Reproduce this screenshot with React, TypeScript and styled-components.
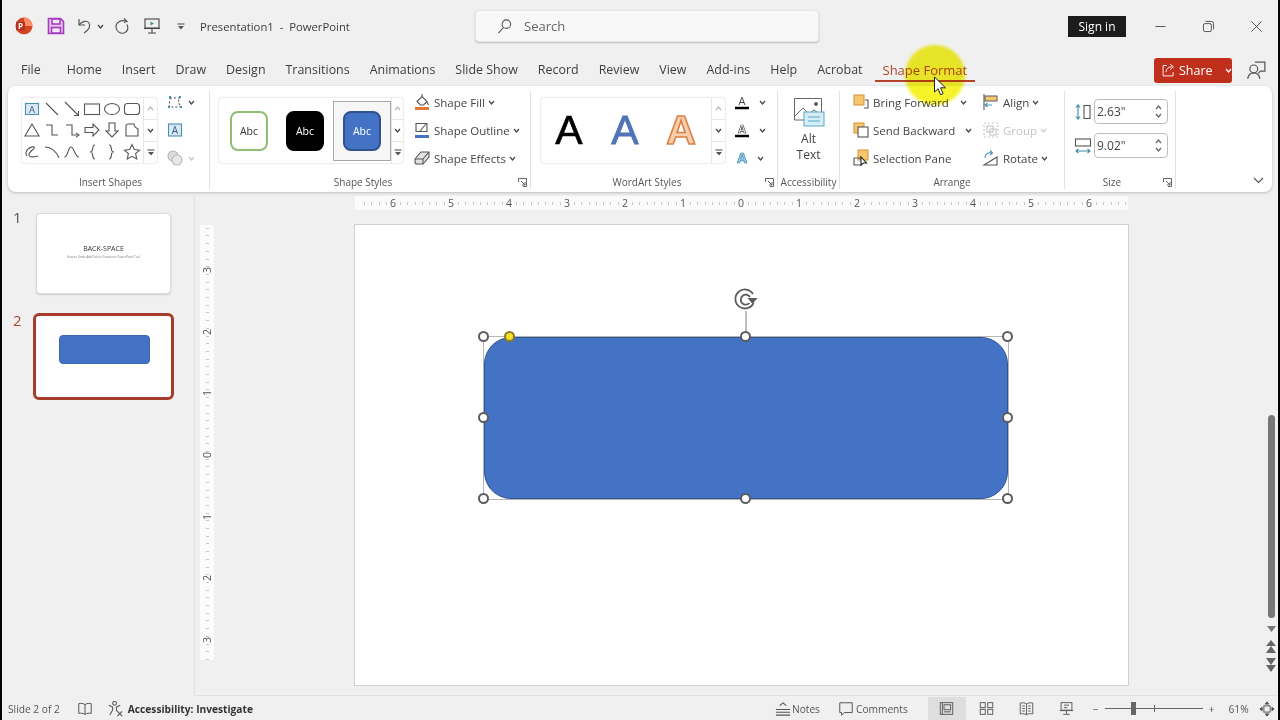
import React from 'react'
import styled, { createGlobalStyle } from 'styled-components'

const Global = createGlobalStyle`
  html, body { margin: 0; padding: 0; background: #000; }
  * { box-sizing: border-box; }
`

const Frame = styled.div`
  position: relative;
  width: 1280px;
  height: 720px;
  overflow: hidden;
  display: flex;
  flex-direction: column;
  background: #f0f0f0;
  border-left: 2px solid #000;
  border-right: 2px solid #000;
  font-family: 'Open Sans', 'Noto Sans', sans-serif;
  color: #444;
`

const Highlight = styled.div`
  position: absolute;
  left: 903px;
  top: 45px;
  width: 60px;
  height: 60px;
  border-radius: 50%;
  background: #f6f32a;
  mix-blend-mode: multiply;
  filter: blur(1.5px);
  z-index: 5;
`

const Pointer = styled.svg`
  position: absolute;
  left: 931px;
  top: 76px;
  z-index: 6;
`

/* title bar */
const TitleBar = styled.header`
  height: 52px;
  display: flex;
  align-items: center;
  padding-left: 13px;
`

const QuickIcon = styled.span<{ $gap: number; $center?: boolean }>`
  display: flex;
  align-items: ${p => (p.$center ? 'center' : 'stretch')};
  margin-left: ${p => p.$gap}px;
`

const DocTitle = styled.div`
  width: 275px;
  margin-left: 15px;
  font-size: 11.3px;
  color: #3c3c3c;
  white-space: pre;
`

const SearchBox = styled.div`
  width: 344px;
  height: 32px;
  display: flex;
  align-items: center;
  gap: 11px;
  padding-left: 20px;
  background: #f8f8f8;
  border-radius: 4px;
  border: 1px solid #e6e6e6;
  box-shadow: 0 1px 2px rgba(0, 0, 0, 0.22);
  font-size: 13px;
  color: #666;
`

const SignIn = styled.div`
  width: 58px;
  height: 21px;
  margin-left: auto;
  margin-right: 8px;
  background: #1c1c1c;
  color: #fff;
  font-size: 12px;
  line-height: 21px;
  text-align: center;
`

const WinButton = styled.div`
  width: 48px;
  padding-left: 4px;
  display: flex;
  justify-content: center;
`

/* tabs */
const TabBar = styled.nav`
  height: 34px;
  display: flex;
  align-items: center;
  padding: 2px 12px 0 19px;
`

const TabList = styled.div`
  display: flex;
  gap: 20px;
  font-size: 12.45px;
  line-height: 18px;
  color: #3f3f3f;
`

const Tab = styled.span<{ $active?: boolean; $first?: boolean }>`
  position: relative;
  white-space: nowrap;
  margin-right: ${p => (p.$first ? 6 : 0)}px;
  color: ${p => (p.$active ? '#b3432c' : 'inherit')};
  font-size: ${p => (p.$active ? '13px' : 'inherit')};
  &::after {
    content: '';
    display: ${p => (p.$active ? 'block' : 'none')};
    position: absolute;
    left: -8px;
    right: -8px;
    bottom: -3px;
    height: 2px;
    background: #b3432c;
  }
`

const ShareButton = styled.div`
  margin-left: auto;
  margin-right: 14px;
  width: 78px;
  height: 25px;
  display: flex;
  align-items: center;
  gap: 3px;
  padding-left: 7px;
  background: #bf2f1c;
  border-radius: 3px;
  color: #fff;
  font-size: 12.5px;
`

/* ribbon */
const Ribbon = styled.section`
  height: 106px;
  margin: 0 6px;
  display: flex;
  padding: 5px 0 3px;
  background: #fff;
  border-radius: 8px;
  box-shadow: 0 1px 3px rgba(0, 0, 0, 0.22);
  font-size: 11.5px;
  color: #444;
`

const Group = styled.div<{ $w: number }>`
  position: relative;
  width: ${p => p.$w}px;
  display: flex;
  flex-direction: column;
  border-right: 1px solid #e2e2e2;
`

const GroupBody = styled.div<{ $pad: number }>`
  height: 84px;
  display: flex;
  align-items: flex-start;
  padding-left: ${p => p.$pad}px;
`

const GroupLabel = styled.div<{ $pl?: number; $pr?: number }>`
  height: 14px;
  line-height: 14px;
  padding: 0 ${p => p.$pr ?? 0}px 0 ${p => p.$pl ?? 0}px;
  font-size: 10px;
  color: #555;
  text-align: center;
`

const Launcher = styled.svg`
  position: absolute;
  right: 3px;
  bottom: 2px;
`

const Gallery = styled.div<{ $w: number }>`
  width: ${p => p.$w}px;
  height: 65px;
  margin-top: 7px;
  display: flex;
  border-radius: 3px;
  box-shadow: 0 0 2px rgba(0, 0, 0, 0.28);
  background: #fff;
`

const GalleryItems = styled.div`
  flex: 1;
  display: flex;
  align-items: center;
  position: relative;
`

const ShapeGrid = styled.div`
  flex: 1;
  display: grid;
  grid-template-columns: repeat(6, 20px);
  grid-auto-rows: 21.6px;
  place-items: center;
`

const Scroller = styled.div`
  width: 14px;
  display: flex;
  flex-direction: column;
  border-left: 1px solid #e6e6e6;
`

const ScrollCell = styled.div`
  flex: 1;
  display: flex;
  align-items: center;
  justify-content: center;
  border-bottom: 1px solid #e6e6e6;
  &:last-child { border-bottom: none; }
`

const StyleThumb = styled.div<{ $bg: string; $line: string; $fg: string; $sel?: boolean }>`
  width: 38px;
  height: 40px;
  border-radius: 8px;
  margin: 0 ${p => (p.$sel ? 9 : 0)}px;
  background: ${p => p.$bg};
  border: 2px solid ${p => p.$line};
  color: ${p => p.$fg};
  font-size: 10.5px;
  display: flex;
  align-items: center;
  justify-content: center;
`

const StyleCell = styled.div<{ $sel?: boolean }>`
  height: 60px;
  display: flex;
  align-items: center;
  margin-left: ${p => (p.$sel ? 2 : 11)}px;
  margin-right: ${p => (p.$sel ? 0 : 7)}px;
  border: ${p => (p.$sel ? '1px solid #a8a8a8' : 'none')};
  background: ${p => (p.$sel ? '#f6f6f6' : 'transparent')};
`

const ArtLetter = styled.span<{ $color: string; $outline: string; $w: number; $bold?: boolean }>`
  width: 56px;
  text-align: center;
  font-family: 'Liberation Sans', sans-serif;
  font-size: 41px;
  font-weight: ${p => (p.$bold ? 700 : 400)};
  line-height: 1;
  color: ${p => p.$color};
  -webkit-text-stroke: ${p => p.$w}px ${p => p.$outline};
`

const CommandColumn = styled.div<{ $left: number; $w?: number }>`
  margin: -1px 0 0 ${p => p.$left}px;
  width: ${p => (p.$w ? `${p.$w}px` : 'auto')};
  display: flex;
  flex-direction: column;
  gap: 4px;
`

const Command = styled.div<{ $off?: boolean }>`
  height: 24px;
  display: flex;
  align-items: center;
  gap: 3px;
  white-space: nowrap;
  color: ${p => (p.$off ? '#b8b8b8' : '#444')};
  opacity: ${p => (p.$off ? 0.85 : 1)};
`

const Caret = styled.svg<{ $left?: number }>`
  margin-left: ${p => p.$left ?? 0}px;
  flex: none;
`

const AltButton = styled.div`
  width: 100%;
  display: flex;
  flex-direction: column;
  align-items: center;
  padding-top: 6px;
  line-height: 16px;
  font-size: 12px;
`

const AltWord = styled.span<{ $top?: number }>`
  margin-top: ${p => p.$top ?? 0}px;
`

const SizeColumn = styled.div`
  display: flex;
  flex-direction: column;
  gap: 9px;
  padding-top: 8px;
`

const SizeRow = styled.div`
  display: flex;
  align-items: center;
  gap: 2px;
`

const SpinBox = styled.div`
  width: 74px;
  height: 25px;
  display: flex;
  align-items: center;
  justify-content: space-between;
  padding: 0 5px 0 2px;
  border: 1px solid #bdbdbd;
  border-radius: 4px;
  font-size: 12px;
`

const SpinArrows = styled.div`
  display: flex;
  flex-direction: column;
  gap: 3px;
`

const Collapse = styled.div`
  margin-left: auto;
  margin-right: 8px;
  align-self: flex-end;
  padding-bottom: 5px;
  display: flex;
`

/* body */
const Body = styled.main`
  flex: 1;
  display: flex;
  min-height: 0;
`

const Sidebar = styled.aside`
  width: 193px;
  border-right: 1px solid #e2e2e2;
  display: flex;
  flex-direction: column;
  gap: 19px;
  padding-top: 21px;
`

const SlideEntry = styled.div`
  display: flex;
  align-items: flex-start;
  padding-left: 11px;
`

const SlideNumber = styled.span<{ $active?: boolean }>`
  width: 20px;
  font-size: 15px;
  line-height: 18px;
  color: ${p => (p.$active ? '#b3432c' : '#555')};
  margin-top: ${p => (p.$active ? -2 : -5)}px;
`

const Thumb = styled.div<{ $active?: boolean }>`
  display: flex;
  flex-direction: column;
  align-items: center;
  justify-content: center;
  background: #fff;
  width: ${p => (p.$active ? 141 : 135)}px;
  height: ${p => (p.$active ? 87 : 81)}px;
  margin-left: ${p => (p.$active ? 0 : 3)}px;
  border-radius: ${p => (p.$active ? 6 : 4)}px;
  border: ${p => (p.$active ? '3px solid #a83c2c' : '1px solid #dcdcdc')};
  box-shadow: ${p => (p.$active ? 'none' : '0 1px 2px rgba(0,0,0,.15)')};
`

const ThumbTitle = styled.div`
  font-size: 7px;
  line-height: 9px;
  margin-top: -2px;
  color: #333;
`

const ThumbSub = styled.div`
  font-size: 3px;
  line-height: 8px;
  color: #777;
  white-space: nowrap;
`

const ThumbShape = styled.div`
  width: 91px;
  height: 29px;
  margin: 0 0 14px 1px;
  border-radius: 4px;
  background: #4472c4;
  border: 1px solid #3d66ad;
`

const Editor = styled.div`
  flex: 1;
  display: flex;
  flex-direction: column;
  padding-top: 4px;
  border-bottom: 1px solid #e2e2e2;
`

const RulerH = styled.div`
  width: 773px;
  height: 14px;
  margin-left: 160px;
  padding: 0 34px 0 33px;
  display: flex;
  justify-content: space-between;
  align-items: center;
  font-size: 10.5px;
  color: #555;
  background:
    repeating-linear-gradient(90deg, #c8c8c8 0 1px, transparent 1px 7.25px) 9px center / 100% 3px no-repeat,
    #fbfbfb;
`

const RulerDigit = styled.span`
  width: 10px;
  text-align: center;
  background: #fbfbfb;
`

const Workspace = styled.div`
  flex: 1;
  display: flex;
  margin-top: 14px;
`

const RulerV = styled.div`
  width: 14px;
  height: 435px;
  margin: 1px 140px 0 5px;
  padding: 40px 0 15px;
  display: flex;
  flex-direction: column;
  justify-content: space-between;
  align-items: center;
  font-size: 10.5px;
  color: #555;
  background:
    repeating-linear-gradient(0deg, #c8c8c8 0 1px, transparent 1px 7.7px) center / 3px 100% no-repeat,
    #fbfbfb;
`

const RulerVDigit = styled.span`
  height: 10px;
  line-height: 10px;
  display: block;
  transform: rotate(-90deg);
  background: #fbfbfb;
`

const Slide = styled.div`
  position: relative;
  width: 775px;
  height: 462px;
  background: #fff;
  border: 1px solid #d0d0d0;
`

const SelectionFrame = styled.div`
  position: absolute;
  left: 127.5px;
  top: 111px;
  width: 526px;
  height: 164px;
  border: 1px solid #b5b5b5;
`

const BlueShape = styled.div`
  position: absolute;
  inset: 0;
  background: #4472c4;
  border: 1.5px solid #30548f;
  border-radius: 27px;
`

const Handle = styled.span<{ $x: string; $y: string; $yellow?: boolean }>`
  position: absolute;
  left: ${p => p.$x};
  top: ${p => p.$y};
  width: 11px;
  height: 11px;
  margin: -6px 0 0 -6px;
  border-radius: 50%;
  background: ${p => (p.$yellow ? '#f2e22a' : '#fff')};
  border: 2px solid ${p => (p.$yellow ? '#8a7c28' : '#5c5c5c')};
`

const RotateStem = styled.div`
  position: absolute;
  left: 50%;
  top: -26px;
  width: 2px;
  height: 26px;
  margin-left: -1px;
  background: #bdbdbd;
`

const RotateIcon = styled.svg`
  position: absolute;
  left: 248px;
  top: -50px;
`

const ScrollRail = styled.div`
  margin-left: auto;
  margin-right: 2px;
  margin-bottom: 23px;
  width: 10px;
  display: flex;
  flex-direction: column;
  justify-content: flex-end;
  align-items: center;
  gap: 4px;
`

const ScrollThumb = styled.div`
  width: 7px;
  height: 203px;
  margin-bottom: 4px;
  border-radius: 4px;
  background: #777;
`

const ScrollDown = styled.svg`
  margin-bottom: 4px;
`

/* status bar */
const StatusBar = styled.footer`
  height: 24px;
  display: flex;
  align-items: center;
  padding: 1px 0 0 6px;
  font-size: 10.2px;
  color: #555;
`

const StatusText = styled.span<{ $strong?: boolean; $left?: number }>`
  margin-left: ${p => p.$left ?? 0}px;
  font-weight: ${p => (p.$strong ? 700 : 400)};
  color: ${p => (p.$strong ? '#333' : '#555')};
  white-space: nowrap;
`

const StatusIcon = styled.span<{ $left: number }>`
  display: flex;
  margin-left: ${p => p.$left}px;
`

const ViewButton = styled.div<{ $active?: boolean; $left?: number }>`
  width: 38px;
  height: 23px;
  margin-left: ${p => p.$left ?? 0}px;
  display: flex;
  align-items: center;
  justify-content: center;
  background: ${p => (p.$active ? '#dedede' : 'transparent')};
`

const Zoom = styled.div`
  position: relative;
  width: 98px;
  height: 1px;
  margin: 0 6px;
  background: #666;
`

const ZoomThumb = styled.span`
  position: absolute;
  left: 26px;
  top: -6px;
  width: 5px;
  height: 13px;
  background: #666;
`

const ZoomTick = styled.span`
  position: absolute;
  left: 49px;
  top: -3px;
  width: 1px;
  height: 7px;
  background: #666;
`

type SvgProps = React.SVGProps<SVGSVGElement>
const Ico = ({ size = 18, children, ...rest }: SvgProps & { size?: number }) => (
  <svg width={size} height={size} viewBox="0 0 18 18" fill="none" stroke="#555" strokeWidth={1.1} {...rest}>
    {children}
  </svg>
)

const Chevron = ({ left, color = '#444', up }: { left?: number; color?: string; up?: boolean }) => (
  <Caret $left={left} width="7" height="5" viewBox="0 0 7 5" fill="none" stroke={color} strokeWidth="1.2">
    <path d={up ? 'M1 4l2.5-3L6 4' : 'M1 1l2.5 3L6 1'} />
  </Caret>
)

const More = () => (
  <svg width="8" height="7" viewBox="0 0 8 7" fill="none" stroke="#555" strokeWidth="1.1">
    <path d="M0.5 1h7" />
    <path d="M1 3h6l-3 3.5z" fill="#555" stroke="none" />
  </svg>
)

const GalleryScroll = () => (
  <Scroller>
    <ScrollCell><Chevron up color="#bbb" /></ScrollCell>
    <ScrollCell><Chevron /></ScrollCell>
    <ScrollCell><More /></ScrollCell>
  </Scroller>
)

const DialogMark = () => (
  <Launcher width="9" height="9" viewBox="0 0 9 9" fill="none" stroke="#666" strokeWidth="1">
    <path d="M0.5 4V0.5H8.5V8.5H5" />
    <path d="M3 3l4 4M4 7h3V4" />
  </Launcher>
)

const ShapeIcons = [
  <><rect x="2.5" y="3.5" width="13" height="11" fill="#d9e8f2" stroke="#4a8fb5" /><text x="9" y="13" fontSize="9.5" textAnchor="middle" fill="#3a5f80" stroke="none" fontFamily="Open Sans">A</text></>,
  <path d="M3 3l12 12" />,
  <><path d="M2 2l13 13" /><path d="M15.5 11v4.5H11" /></>,
  <rect x="1.5" y="4" width="15" height="10.5" />,
  <ellipse cx="9" cy="9" rx="7.5" ry="5.5" />,
  <rect x="1.5" y="3.5" width="15" height="11" rx="3" />,
  <path d="M9 3L2 15h14z" />,
  <path d="M3 4h6v10h6" />,
  <><path d="M3 4h6v10h5" /><path d="M13 12l3 2-3 2" /></>,
  <path d="M2 6.5h8V3l6 6-6 6v-3.500H2z" />,
  <path d="M6 2h6v8h3l-6 6-6-6h3z" />,
  <path d="M3 15V5a2 2 0 012-2h6c0 3 2 4 4 5v7z" />,
  <path d="M4 13C1 9 6 3 11 4c2 1-4 4-5 7-1 4 5 3 9 2" />,
  <path d="M2 4c6 0 11 4 14 11" />,
  <path d="M1.500 14C5 14 5 4 8 4s4 10 8 10" />,
  <path d="M12 2c-3 0-2 5-3 6-.5 .8-2 1-2 1s1.500 .2 2 1c1 1 0 6 3 6" />,
  <path d="M6 2c3 0 2 5 3 6 .5 .8 2 1 2 1s-1.500 .2-2 1c-1 1 0 6-3 6" />,
  <path d="M9 1.500l2.300 5 5.200 .6-3.900 3.500 1.100 5.400L9 13.300 4.300 16l1.100-5.400L1.500 7.100l5.200-.6z" />,
]

const Square = ({ x, y, fill = '#f6c66f', line = '#d39a3c' }: { x: number; y: number; fill?: string; line?: string }) => (
  <rect x={x} y={y} width="10" height="10" fill={fill} stroke={line} />
)

const TABS = ['Home', 'Insert', 'Draw', 'Design', 'Transitions', 'Animations', 'Slide Show', 'Record', 'Review', 'View', 'Add-ins', 'Help', 'Acrobat']
const H_MARKS = [6, 5, 4, 3, 2, 1, 0, 1, 2, 3, 4, 5, 6]
const V_MARKS = [3, 2, 1, 0, 1, 2, 3]
const HANDLES: [string, string][] = [
  ['0', '0'], ['50%', '0'], ['100%', '0'],
  ['0', '50%'], ['100%', '50%'],
  ['0', '100%'], ['50%', '100%'], ['100%', '100%'],
]

const App = () => (
  <Frame>
    <Global />
    <Highlight />
    <Pointer width="14" height="20" viewBox="0 0 14 20">
      <path d="M1.500 1v15l3.600-3.300 2.400 6 2.600-1.100-2.500-5.800H12.500z" fill="#fff" stroke="#222" strokeWidth="1" />
    </Pointer>

    <TitleBar>
      <QuickIcon $gap={0}>
        <svg width="18" height="18" viewBox="0 0 18 18">
          <circle cx="9" cy="9" r="8.500" fill="#d24726" />
          <path d="M9 .5a8.500 8.500 0 018.500 8.500H9z" fill="#ff8f6b" />
          <rect x="1" y="4.500" width="9" height="9" rx="1" fill="#b7321a" />
          <text x="5.500" y="12" fontSize="8" fontWeight="700" textAnchor="middle" fill="#fff" fontFamily="Open Sans">P</text>
        </svg>
      </QuickIcon>
      <QuickIcon $gap={14}>
        <Ico stroke="#a43cbe" strokeWidth={1.6}>
          <path d="M1.500 1.500h12l3 3v12h-15z" fill="#e7c9ef" />
          <rect x="5" y="2" width="8" height="5" fill="#f4e6f7" />
          <rect x="4.500" y="10.500" width="9" height="5.500" fill="#f4e6f7" />
        </Ico>
      </QuickIcon>
      <QuickIcon $gap={11}>
        <Ico stroke="#555" strokeWidth={1.2}>
          <path d="M3 2v6h6" />
          <path d="M3 8c3-4 8-5 10-2s0 7-5 10" />
        </Ico>
      </QuickIcon>
      <QuickIcon $gap={3} $center><Chevron /></QuickIcon>
      <QuickIcon $gap={9}>
        <Ico stroke="#555" strokeWidth={1.2}>
          <path d="M11 1.500l3 3-3 1" />
          <path d="M13 4C8 2.500 2.500 5.500 3 10.500c.5 4 4.500 6.500 8 5.500s5-5 3-8.500" />
        </Ico>
      </QuickIcon>
      <QuickIcon $gap={12}>
        <Ico stroke="#444">
          <rect x="2" y="2" width="14" height="9" />
          <path d="M1 11.500h16M9 11.500v4M5 16h8" />
          <path d="M7.500 4.500l3.500 2-3.500 2z" fill="#3d9a6a" stroke="none" />
        </Ico>
      </QuickIcon>
      <QuickIcon $gap={16} $center><More /></QuickIcon>
      <DocTitle>Presentation1  -  PowerPoint</DocTitle>
      <SearchBox>
        <Ico size={17}><circle cx="11" cy="6.500" r="4.500" /><path d="M8 10l-5.500 6" /></Ico>
        Search
      </SearchBox>
      <SignIn>Sign in</SignIn>
      <WinButton><Ico size={13} stroke="#333"><path d="M2 9h14" /></Ico></WinButton>
      <WinButton>
        <Ico size={13} stroke="#333"><rect x="2" y="5" width="11" height="11" rx="2" /><path d="M5 2h8a3 3 0 013 3v8" /></Ico>
      </WinButton>
      <WinButton><Ico size={13} stroke="#333"><path d="M2 2l14 14M16 2L2 16" /></Ico></WinButton>
    </TitleBar>

    <TabBar>
      <TabList>
        <Tab $first>File</Tab>
        {TABS.map(t => <Tab key={t}>{t}</Tab>)}
        <Tab $active>Shape Format</Tab>
      </TabList>
      <ShareButton>
        <Ico size={15} stroke="#fff"><path d="M7 3H2.500v12.500h12V11" /><path d="M6 11c0-4 3-6.500 7-6.500M11 1.500l4 3-4 3.500" /></Ico>
        Share
        <Chevron left={9} color="#fff" />
      </ShareButton>
      <Ico size={20} stroke="#555">
        <circle cx="7" cy="8" r="3.500" />
        <path d="M1.500 17c.5-3.500 2.500-5.500 5.500-5.500s5 2 5.500 5.500" />
        <path d="M8 2h9v8h-4l-2 2" />
      </Ico>
    </TabBar>

    <Ribbon>
      <Group $w={202}>
        <GroupBody $pad={14}>
          <Gallery $w={135}>
            <ShapeGrid>
              {ShapeIcons.map((icon, i) => <Ico key={i} size={18}>{icon}</Ico>)}
            </ShapeGrid>
            <GalleryScroll />
          </Gallery>
          <CommandColumn $left={9}>
            <Command>
              <Ico>
                <path d="M4 5h10l-2 4 3 5H3z" strokeDasharray="2 2" stroke="#555" />
                <path d="M3 4h2M13 4h2M2 14h2M14 14h2" stroke="#3f8cab" strokeWidth={2} />
              </Ico>
              <Chevron left={1} />
            </Command>
            <Command>
              <Ico><rect x="2.500" y="3" width="13" height="12" fill="#d9e8f2" stroke="#4a8fb5" /><text x="9" y="13" fontSize="10" textAnchor="middle" fill="#3a5f80" stroke="none" fontFamily="Open Sans">A</text></Ico>
            </Command>
            <Command>
              <Ico stroke="#b5b5b5"><circle cx="7" cy="7" r="5" fill="#ddd" /><circle cx="11" cy="11" r="5" fill="#e8e8e8" /></Ico>
              <Chevron left={1} color="#c4c4c4" />
            </Command>
          </CommandColumn>
        </GroupBody>
        <GroupLabel $pl={4}>Insert Shapes</GroupLabel>
      </Group>

      <Group $w={321}>
        <GroupBody $pad={9}>
          <Gallery $w={184}>
            <GalleryItems>
              <StyleCell><StyleThumb $bg="#fff" $line="#8fbf73" $fg="#333">Abc</StyleThumb></StyleCell>
              <StyleCell><StyleThumb $bg="#000" $line="#000" $fg="#fff">Abc</StyleThumb></StyleCell>
              <StyleCell $sel><StyleThumb $sel $bg="#4472c4" $line="#2f528f" $fg="#fff">Abc</StyleThumb></StyleCell>
            </GalleryItems>
            <GalleryScroll />
          </Gallery>
          <CommandColumn $left={10}>
            <Command>
              <Ico><path d="M4 8.500l5-5 5 5-3.500 3.500h-3z" fill="#fff" /><path d="M9 3.500V1M14 9l1.500 3" /><path d="M2 15.500h14" stroke="#e07b39" strokeWidth={3} /></Ico>
              Shape Fill <Chevron />
            </Command>
            <Command>
              <Ico><path d="M3 2.500h11v8H3z" /><path d="M7 10l6-7" /><path d="M2 15.500h14" stroke="#4472c4" strokeWidth={3} /></Ico>
              Shape Outline <Chevron />
            </Command>
            <Command>
              <Ico><path d="M2 10l6-7h8v5l-6 7H4a2 2 0 01-2-2z" fill="#e4e4e4" /><path d="M2 10h8v5M10 10l6-7" /></Ico>
              Shape Effects <Chevron />
            </Command>
          </CommandColumn>
        </GroupBody>
        <GroupLabel $pr={14}>Shape Styles</GroupLabel>
        <DialogMark />
      </Group>

      <Group $w={247}>
        <GroupBody $pad={10}>
          <Gallery $w={184}>
            <GalleryItems>
              <ArtLetter $color="#000" $outline="#000" $w={0.6}>A</ArtLetter>
              <ArtLetter $color="#4f74b8" $outline="#4f74b8" $w={0.8}>A</ArtLetter>
              <ArtLetter $bold $color="#f7cfae" $outline="#dd7f42" $w={1.6}>A</ArtLetter>
            </GalleryItems>
            <GalleryScroll />
          </Gallery>
          <CommandColumn $left={8}>
            <Command>
              <Ico><text x="9" y="12" fontSize="11" textAnchor="middle" fill="#444" stroke="none" fontFamily="Open Sans">A</text><path d="M2 15h14" stroke="#000" strokeWidth={2.500} /></Ico>
              <Chevron left={5} />
            </Command>
            <Command>
              <Ico><text x="9" y="12" fontSize="11" fontWeight="700" textAnchor="middle" fill="#fff" stroke="#444" strokeWidth={0.7} fontFamily="Open Sans">A</text><path d="M2 15h14" stroke="#000" strokeWidth={2.500} /></Ico>
              <Chevron left={5} />
            </Command>
            <Command>
              <Ico><text x="9" y="14" fontSize="14" fontWeight="700" textAnchor="middle" fill="#9fd0ea" stroke="#2f7fae" strokeWidth={0.7} fontFamily="Open Sans">A</text></Ico>
              <Chevron left={3} />
            </Command>
          </CommandColumn>
        </GroupBody>
        <GroupLabel $pr={14}>WordArt Styles</GroupLabel>
        <DialogMark />
      </Group>

      <Group $w={62}>
        <GroupBody $pad={0}>
          <AltButton>
            <svg width="32" height="31" viewBox="0 0 32 31" fill="none" stroke="#666" strokeWidth="1">
              <path d="M16 23H1.500V1.500h27V15" />
              <path d="M2 19l8-8 6 6 5-4 7 5" />
              <circle cx="23" cy="7" r="1.500" fill="#555" />
              <rect x="11" y="15" width="20" height="14" fill="#d5edf5" stroke="#5aa8c5" />
              <path d="M15 20h12M15 24h12" stroke="#5aa8c5" />
            </svg>
            <AltWord $top={3}>Alt</AltWord>
            <AltWord>Text</AltWord>
          </AltButton>
        </GroupBody>
        <GroupLabel>Accessibility</GroupLabel>
      </Group>

      <Group $w={225}>
        <GroupBody $pad={12}>
          <CommandColumn $left={0} $w={130}>
            <Command>
              <Ico><path d="M12 15h4V7h-3" stroke="#555" /><Square x={2} y={2} /></Ico>
              Bring Forward <Chevron left={8} />
            </Command>
            <Command>
              <Ico><Square x={2} y={2} /><rect x="6" y="6" width="10" height="10" fill="#fff" /></Ico>
              Send Backward <Chevron left={7} />
            </Command>
            <Command>
              <Ico><Square x={6} y={1} /><path d="M2 9h8M2 9v7h8" /><path d="M9 8l0 8 2.500-2h3z" fill="#fff" stroke="#222" /></Ico>
              Selection Pane
            </Command>
          </CommandColumn>
          <CommandColumn $left={0}>
            <Command>
              <Ico><path d="M2 1v16" /><rect x="3" y="3" width="12" height="5" fill="#f6c66f" stroke="#666" /><path d="M10 12H3M5.500 10L3 12l2.500 2" stroke="#4a8fb5" /></Ico>
              Align <Chevron />
            </Command>
            <Command $off>
              <Ico stroke="#bbb"><path d="M2 2h14v14H2z" strokeDasharray="2 2" /><rect x="5" y="5" width="6" height="6" /><rect x="8" y="8" width="6" height="6" /></Ico>
              Group <Chevron color="#c4c4c4" />
            </Command>
            <Command>
              <Ico><path d="M2 16l13-8v8z" /><path d="M3 9c0-4 3-6 7-5M8 1.500l2.500 2.500L8 6" stroke="#4a8fb5" /></Ico>
              Rotate <Chevron />
            </Command>
          </CommandColumn>
        </GroupBody>
        <GroupLabel>Arrange</GroupLabel>
      </Group>

      <Group $w={111}>
        <GroupBody $pad={9}>
          <SizeColumn>
            <SizeRow>
              <Ico><rect x="10" y="2.500" width="6" height="13" /><path d="M4 2v14M2 4.500L4 2l2 2.500M2 13.500L4 16l2-2.500" stroke="#3f8cab" /></Ico>
              <SpinBox>2.63"<SpinArrows><Chevron up color="#666" /><Chevron color="#666" /></SpinArrows></SpinBox>
            </SizeRow>
            <SizeRow>
              <Ico><rect x="1.500" y="2" width="15" height="7" /><path d="M2 14h14M4.500 12L2 14l2.500 2M13.500 12l2.500 2-2.500 2" stroke="#3f8cab" /></Ico>
              <SpinBox>9.02"<SpinArrows><Chevron up color="#666" /><Chevron color="#666" /></SpinArrows></SpinBox>
            </SizeRow>
          </SizeColumn>
        </GroupBody>
        <GroupLabel $pr={16}>Size</GroupLabel>
        <DialogMark />
      </Group>

      <Collapse>
        <svg width="11" height="7" viewBox="0 0 11 7" fill="none" stroke="#555" strokeWidth="1.200"><path d="M1 1l4.500 4.500L10 1" /></svg>
      </Collapse>
    </Ribbon>

    <Body>
      <Sidebar>
        <SlideEntry>
          <SlideNumber>1</SlideNumber>
          <Thumb>
            <ThumbTitle>BACK-SPACE</ThumbTitle>
            <ThumbSub>How to Undo Add Delete Variations PowerPoint Tool</ThumbSub>
          </Thumb>
        </SlideEntry>
        <SlideEntry>
          <SlideNumber $active>2</SlideNumber>
          <Thumb $active><ThumbShape /></Thumb>
        </SlideEntry>
      </Sidebar>

      <Editor>
        <RulerH>
          {H_MARKS.map((n, i) => <RulerDigit key={i}>{n}</RulerDigit>)}
        </RulerH>
        <Workspace>
          <RulerV>
            {V_MARKS.map((n, i) => <RulerVDigit key={i}>{n}</RulerVDigit>)}
          </RulerV>
          <Slide>
            <SelectionFrame>
              <BlueShape />
              <RotateStem />
              <RotateIcon width="28" height="26" viewBox="0 0 28 26" fill="none" stroke="#5c5c5c" strokeWidth="1.800">
                <path d="M21 7a9.500 9.500 0 10.500 9" />
                <path d="M18 10a5 5 0 10-.5 6" />
                <path d="M15.500 11h10l-5 6z" fill="#5c5c5c" stroke="none" />
              </RotateIcon>
              {HANDLES.map(([x, y]) => <Handle key={x + y} $x={x} $y={y} />)}
              <Handle $x="26px" $y="0" $yellow />
            </SelectionFrame>
          </Slide>
          <ScrollRail>
            <ScrollThumb />
            <ScrollDown width="9" height="6" viewBox="0 0 9 6"><path d="M0 0h9L4.500 6z" fill="#777" /></ScrollDown>
            <svg width="10" height="14" viewBox="0 0 10 14" fill="#666"><path d="M5 0l5 6H0zM5 6l5 7H0z" /></svg>
            <svg width="10" height="14" viewBox="0 0 10 14" fill="#666"><path d="M0 0h10L5 7zM0 7h10l-5 7z" /></svg>
          </ScrollRail>
        </Workspace>
      </Editor>
    </Body>

    <StatusBar>
      <StatusText>Slide 2 of 2</StatusText>
      <StatusIcon $left={17}>
        <Ico size={16}><path d="M9 4C7 2.500 4 2.500 2 3v11c2-.5 4.500-.5 7 1 2.500-1.500 5-1.500 7-1V3c-2-.5-5-.5-7 1zM9 4v11" /></Ico>
      </StatusIcon>
      <StatusIcon $left={14}>
        <Ico size={17}>
          <circle cx="8" cy="3.500" r="2" />
          <path d="M2 5.500l4 2v3L3 16M14 5.500l-4 2v3l1 2" />
          <path d="M11 12l5 5M16 12l-5 5" />
        </Ico>
      </StatusIcon>
      <StatusText $strong $left={4}>Accessibility: Investigate</StatusText>

      <StatusIcon $left={522}>
        <Ico size={17}><path d="M1 10h15M1 13h15M1 16h15" /><path d="M5 6l3.500-3L12 6" /></Ico>
      </StatusIcon>
      <StatusText>Notes</StatusText>
      <StatusIcon $left={18}>
        <Ico size={16}><path d="M2 2h14v11H7l-3 3v-3H2z" /></Ico>
      </StatusIcon>
      <StatusText $left={2}>Comments</StatusText>
      <ViewButton $active $left={20}>
        <Ico size={15}><rect x="1.500" y="2" width="15" height="14" /><rect x="6" y="4.500" width="8" height="6" /><path d="M4 2v14M6 13h8" /></Ico>
      </ViewButton>
      <ViewButton $left={2}>
        <Ico size={15}><rect x="1.500" y="2" width="6" height="6" /><rect x="10.500" y="2" width="6" height="6" /><rect x="1.500" y="10" width="6" height="6" /><rect x="10.500" y="10" width="6" height="6" /></Ico>
      </ViewButton>
      <ViewButton $left={2}>
        <Ico size={15}><path d="M9 3.500C7 2 4 2 1.500 2.500v13C4 15 7 15 9 16.500c2-1.500 5-1.500 7.500-1v-13C14 2 11 2 9 3.500zM9 3.500v13M4 6h3M4 9h3M4 12h3M11 6h3M11 9h3M11 12h3" /></Ico>
      </ViewButton>
      <ViewButton $left={2}>
        <Ico size={15}><rect x="2.500" y="2" width="13" height="9" /><path d="M1 11.500h16M9 11.500v4M5 16h8M6 5h6M6 8h4" /></Ico>
      </ViewButton>
      <StatusText $left={7}>−</StatusText>
      <Zoom><ZoomThumb /><ZoomTick /></Zoom>
      <StatusText>+</StatusText>
      <StatusText $left={14}>61%</StatusText>
      <StatusIcon $left={10}>
        <Ico size={16}><rect x="5.500" y="5.500" width="7" height="7" /><path d="M9 1l2 2.500H7zM9 17l2-2.500H7zM1 9l2.500 2V7zM17 9l-2.500 2V7z" fill="#555" /></Ico>
      </StatusIcon>
    </StatusBar>
  </Frame>
)

export default App
